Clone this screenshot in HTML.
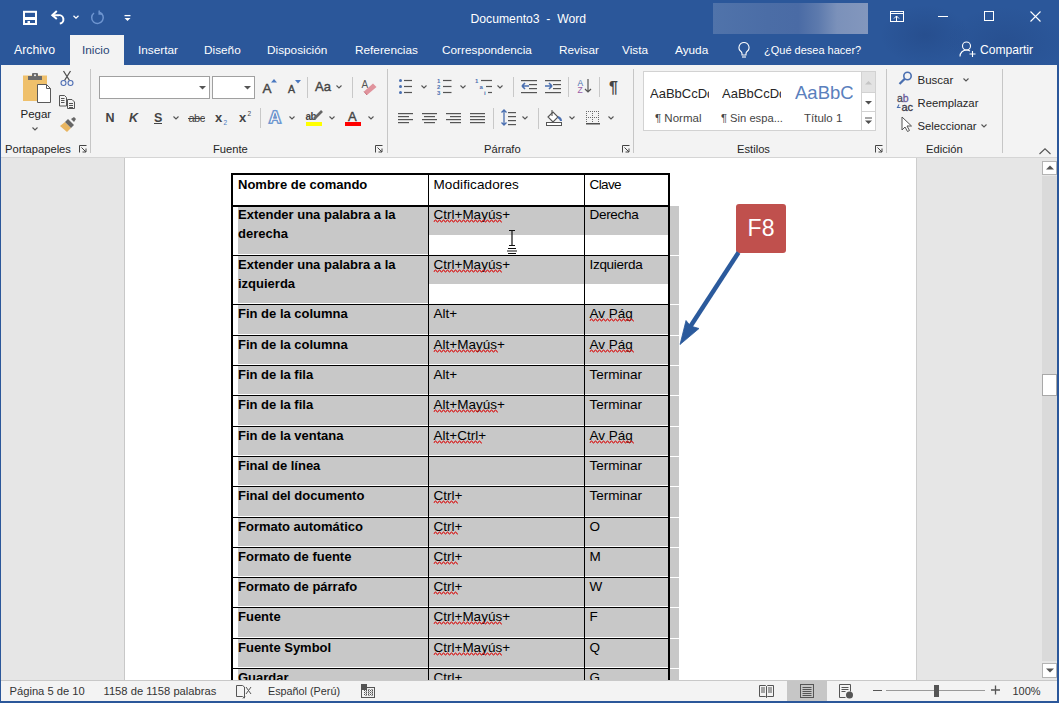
<!DOCTYPE html>
<html><head><meta charset="utf-8">
<style>
*{margin:0;padding:0;box-sizing:border-box}
html,body{width:1059px;height:703px;overflow:hidden;background:#2b579a;font-family:"Liberation Sans",sans-serif;position:relative}
.abs{position:absolute}
.t{position:absolute;white-space:nowrap}
svg{overflow:visible}
</style></head><body>
<div class="abs" style="left:0px;top:0px;width:1059px;height:65px;background:radial-gradient(ellipse 45px 30px at 925px 35px, rgba(20,40,90,0.18), rgba(20,40,90,0) ), radial-gradient(ellipse 60px 35px at 1005px 42px, rgba(20,40,90,0.15), rgba(20,40,90,0)), #2b579a;"></div>
<div class="abs" style="left:1px;top:65px;width:1056px;height:92px;background:#f3f3f3;"></div>
<div class="abs" style="left:1px;top:157px;width:1056px;height:1px;background:#d5d5d5;"></div>
<div class="abs" style="left:1px;top:158px;width:1056px;height:522px;background:#e6e6e6;"></div>
<div class="abs" style="left:125px;top:158px;width:791px;height:522px;background:#ffffff;"></div>
<div class="abs" style="left:124px;top:158px;width:1px;height:522px;background:#c8c8c8;"></div>
<div class="abs" style="left:916px;top:158px;width:1px;height:522px;background:#cdcdcd;"></div>
<div class="abs" style="left:1px;top:680px;width:1056px;height:1px;background:#c8c8c8;"></div>
<div class="abs" style="left:1px;top:681px;width:1056px;height:20px;background:#f3f3f3;"></div>
<div class="abs" style="left:713px;top:3px;width:155px;height:31px;background:linear-gradient(90deg,#5073aa 0%,#4b6da6 35%,#4a6ba5 55%,#5d7aad 68%,#7b91ba 80%,#8397bd 100%);"></div>
<div class="t" style="left:470.5px;top:11.47px;font-size:12.2px;line-height:17px;color:#ffffff;font-weight:normal;">Documento3&nbsp; -&nbsp; Word</div>
<svg class="abs" style="left:22px;top:10px;" width="16" height="16" viewBox="0 0 16 16"><rect x="2" y="1.8" width="12" height="12.2" fill="none" stroke="#fff" stroke-width="2"/><rect x="2" y="7" width="12" height="3" fill="#fff"/><rect x="5.5" y="11" width="2.5" height="3" fill="#fff"/></svg>
<svg class="abs" style="left:50px;top:9px;" width="14" height="17" viewBox="0 0 14 17"><path d="M2 6.2H8.5A4.2 4.2 0 0 1 9.8 14.6" fill="none" stroke="#fff" stroke-width="2"/><path d="M6.8 2.1L2.3 6.2 6.8 10" fill="none" stroke="#fff" stroke-width="2"/></svg>
<svg class="abs" style="left:73px;top:15px;" width="6" height="4" viewBox="0 0 6 4"><path d="M0.5 0.7l2.5 2.5 2.5-2.5" fill="none" stroke="#fff" stroke-width="1.3"/></svg>
<svg class="abs" style="left:90px;top:10px;" width="15" height="15" viewBox="0 0 15 15"><path d="M9.5 2.2A5.8 5.8 0 1 1 4 3" fill="none" stroke="#6e95d0" stroke-width="1.5"/><path d="M9.2 0.5v3.5h3" fill="none" stroke="#6e95d0" stroke-width="1.5"/></svg>
<svg class="abs" style="left:124px;top:14px;" width="7" height="8" viewBox="0 0 7 8"><path d="M0.5 1.6h6" stroke="#fff" stroke-width="1.3"/><path d="M0.5 4h6l-3 3z" fill="#fff"/></svg>
<svg class="abs" style="left:890px;top:11px;" width="15" height="12" viewBox="0 0 15 12"><rect x="0.5" y="0.5" width="13" height="10" fill="none" stroke="#fff"/><path d="M0.5 2.5h13" stroke="#fff"/><path d="M6.5 10V5" stroke="#fff"/><path d="M4 7.5l2.5-2.5 2.5 2.5" fill="none" stroke="#fff"/></svg>
<div class="abs" style="left:938px;top:16px;width:10px;height:1px;background:#fff;"></div>
<svg class="abs" style="left:984px;top:11px;" width="11" height="11" viewBox="0 0 11 11"><rect x="0.5" y="0.5" width="9" height="9" fill="none" stroke="#fff"/></svg>
<svg class="abs" style="left:1030px;top:11px;" width="11" height="11" viewBox="0 0 11 11"><path d="M0.5 0.5l10 10M10.5 0.5l-10 10" stroke="#fff" stroke-width="1.1"/></svg>
<div class="abs" style="left:70px;top:35px;width:54px;height:30px;background:#f3f3f3;"></div>
<div class="t" style="left:14px;top:42.14px;font-size:12.3px;line-height:17px;color:#ffffff;font-weight:normal;">Archivo</div>
<div class="t" style="left:82px;top:42.31px;font-size:11.8px;line-height:17px;color:#2a4575;font-weight:normal;">Inicio</div>
<div class="t" style="left:138px;top:42.31px;font-size:11.8px;line-height:17px;color:#ffffff;font-weight:normal;">Insertar</div>
<div class="t" style="left:204px;top:42.31px;font-size:11.8px;line-height:17px;color:#ffffff;font-weight:normal;">Diseño</div>
<div class="t" style="left:267px;top:42.31px;font-size:11.8px;line-height:17px;color:#ffffff;font-weight:normal;">Disposición</div>
<div class="t" style="left:355px;top:42.31px;font-size:11.8px;line-height:17px;color:#ffffff;font-weight:normal;">Referencias</div>
<div class="t" style="left:442px;top:42.31px;font-size:11.8px;line-height:17px;color:#ffffff;font-weight:normal;">Correspondencia</div>
<div class="t" style="left:559px;top:42.31px;font-size:11.8px;line-height:17px;color:#ffffff;font-weight:normal;">Revisar</div>
<div class="t" style="left:622px;top:42.31px;font-size:11.8px;line-height:17px;color:#ffffff;font-weight:normal;">Vista</div>
<div class="t" style="left:675px;top:42.31px;font-size:11.8px;line-height:17px;color:#ffffff;font-weight:normal;">Ayuda</div>
<svg class="abs" style="left:737px;top:41px;" width="14" height="18" viewBox="0 0 14 18"><path d="M7 1.5a5 5 0 0 0-3 9c.7.6 1 1.3 1 2.2V14h4v-1.3c0-.9.3-1.6 1-2.2a5 5 0 0 0-3-9z" fill="none" stroke="#fff" stroke-width="1.1"/><path d="M5 16h4" stroke="#fff" stroke-width="1.1"/></svg>
<div class="t" style="left:764px;top:43.19px;font-size:11px;line-height:15px;color:#ffffff;font-weight:normal;">¿Qué desea hacer?</div>
<svg class="abs" style="left:959px;top:41px;" width="18" height="17" viewBox="0 0 18 17"><circle cx="7.5" cy="5" r="4" fill="none" stroke="#fff" stroke-width="1.1"/><path d="M1 15.5c0-4 3-6.5 6.5-6.5 1.5 0 2.5.4 3.5 1" fill="none" stroke="#fff" stroke-width="1.1"/><path d="M13.5 10v6M10.5 13h6" stroke="#fff" stroke-width="1.1"/></svg>
<div class="t" style="left:980px;top:41.81px;font-size:12.1px;line-height:17px;color:#ffffff;font-weight:normal;">Compartir</div>
<div class="abs" style="left:90px;top:69px;width:1px;height:84px;background:#c6c6c6;"></div>
<div class="abs" style="left:387px;top:69px;width:1px;height:84px;background:#c6c6c6;"></div>
<div class="abs" style="left:633px;top:69px;width:1px;height:84px;background:#c6c6c6;"></div>
<div class="abs" style="left:886px;top:69px;width:1px;height:84px;background:#c6c6c6;"></div>
<div class="abs" style="left:1002px;top:69px;width:1px;height:84px;background:#c6c6c6;"></div>
<div class="t" style="left:5px;top:140.62px;font-size:11.2px;line-height:16px;color:#262626;font-weight:normal;">Portapapeles</div>
<div class="t" style="left:213px;top:140.62px;font-size:11.2px;line-height:16px;color:#262626;font-weight:normal;">Fuente</div>
<div class="t" style="left:484px;top:140.62px;font-size:11.2px;line-height:16px;color:#262626;font-weight:normal;">Párrafo</div>
<div class="t" style="left:737px;top:140.62px;font-size:11.2px;line-height:16px;color:#262626;font-weight:normal;">Estilos</div>
<div class="t" style="left:926px;top:140.62px;font-size:11.2px;line-height:16px;color:#262626;font-weight:normal;">Edición</div>
<svg class="abs" style="left:79px;top:145px;" width="8" height="8" viewBox="0 0 8 8"><path d="M0.5 7.5V0.5h7" fill="none" stroke="#444" stroke-width="1"/><path d="M2.5 2.5l4.5 4.5M3.5 7h3.5V3.5" fill="none" stroke="#444" stroke-width="1"/></svg>
<svg class="abs" style="left:375px;top:145px;" width="8" height="8" viewBox="0 0 8 8"><path d="M0.5 7.5V0.5h7" fill="none" stroke="#444" stroke-width="1"/><path d="M2.5 2.5l4.5 4.5M3.5 7h3.5V3.5" fill="none" stroke="#444" stroke-width="1"/></svg>
<svg class="abs" style="left:622px;top:145px;" width="8" height="8" viewBox="0 0 8 8"><path d="M0.5 7.5V0.5h7" fill="none" stroke="#444" stroke-width="1"/><path d="M2.5 2.5l4.5 4.5M3.5 7h3.5V3.5" fill="none" stroke="#444" stroke-width="1"/></svg>
<svg class="abs" style="left:875px;top:145px;" width="8" height="8" viewBox="0 0 8 8"><path d="M0.5 7.5V0.5h7" fill="none" stroke="#444" stroke-width="1"/><path d="M2.5 2.5l4.5 4.5M3.5 7h3.5V3.5" fill="none" stroke="#444" stroke-width="1"/></svg>
<svg class="abs" style="left:22px;top:72px;" width="30" height="32" viewBox="0 0 30 32"><rect x="1" y="3.5" width="24" height="25.5" fill="#efc06b"/>
<rect x="6" y="4" width="14" height="4" fill="#6a6a6a"/><rect x="10" y="1" width="6" height="4" rx="1" fill="#6a6a6a"/><circle cx="13" cy="3.2" r="1" fill="#f3f3f3"/>
<path d="M15.5 12.5H24.5L28.5 16.5V30.5H15.5Z" fill="#fff" stroke="#5a5a5a" stroke-width="1"/><path d="M24.5 12.5V16.5H28.5" fill="none" stroke="#5a5a5a" stroke-width="1"/></svg>
<div class="t" style="left:20.5px;top:105.52px;font-size:11.5px;line-height:16px;color:#1e1e1e;font-weight:normal;">Pegar</div>
<svg class="abs" style="left:32px;top:127px;" width="6" height="4" viewBox="0 0 6 4"><path d="M0.5 0.5l2.5 2.5 2.5-2.5" fill="none" stroke="#555" stroke-width="1.1"/></svg>
<svg class="abs" style="left:59px;top:70px;" width="16" height="17" viewBox="0 0 16 17"><path d="M4.5 1l6 9.5M11.5 1l-6 9.5" stroke="#505050" stroke-width="1.3"/>
<circle cx="4.5" cy="13" r="2.5" fill="none" stroke="#4f6fb5" stroke-width="1.1"/><circle cx="11.5" cy="13" r="2.5" fill="none" stroke="#4f6fb5" stroke-width="1.1"/></svg>
<svg class="abs" style="left:59px;top:95px;" width="16" height="14" viewBox="0 0 16 14"><path d="M0.5 0.5h5l2 2v8.5h-7z" fill="none" stroke="#555"/><path d="M2 3.5h3.5M2 5.5h3.5M2 7.5h3.5" stroke="#555"/>
<path d="M8.5 4.5h4.5l2.5 2.5v6.5h-7z" fill="#f3f3f3" stroke="#555"/><path d="M10 8.5h4M10 10.5h4M10 12.5h4" stroke="#555"/></svg>
<svg class="abs" style="left:59px;top:117px;" width="17" height="15" viewBox="0 0 17 15"><path d="M1 9l5-4 6 6-4 4z" fill="#e8b560"/><path d="M6 5l3-3 6 6-3 3z" fill="#666"/><path d="M12 2l3-2 2 2-2 3z" fill="#666"/></svg>
<div class="abs" style="left:99px;top:76px;width:111px;height:23px;background:#fff;border:1px solid #a0a0a0"></div>
<div class="abs" style="left:212px;top:76px;width:43px;height:23px;background:#fff;border:1px solid #a0a0a0"></div>
<svg class="abs" style="left:199px;top:86px;" width="7" height="4" viewBox="0 0 7 4"><path d="M0 0h7l-3.5 3.5z" fill="#555"/></svg>
<svg class="abs" style="left:244px;top:86px;" width="7" height="4" viewBox="0 0 7 4"><path d="M0 0h7l-3.5 3.5z" fill="#555"/></svg>
<div class="t" style="left:262.5px;top:78.82px;font-size:13.5px;line-height:19px;color:#444444;font-weight:normal;-webkit-text-stroke:0.4px #444">A</div>
<svg class="abs" style="left:271px;top:79px;" width="6" height="4" viewBox="0 0 6 4"><path d="M0 3.5h6L3 0z" fill="#4a78c0"/></svg>
<div class="t" style="left:288px;top:81.86px;font-size:10.5px;line-height:15px;color:#444444;font-weight:normal;-webkit-text-stroke:0.4px #444">A</div>
<svg class="abs" style="left:295px;top:80px;" width="6" height="4" viewBox="0 0 6 4"><path d="M0 0h6L3 3.5z" fill="#4a78c0"/></svg>
<div class="abs" style="left:307px;top:77px;width:1px;height:21px;background:#c8c8c8;"></div>
<div class="t" style="left:315px;top:78.00px;font-size:13px;line-height:18px;color:#444444;font-weight:normal;-webkit-text-stroke:0.4px #444">Aa</div>
<svg class="abs" style="left:336px;top:85px;" width="6" height="4" viewBox="0 0 6 4"><path d="M0.5 0.5l2.5 2.5 2.5-2.5" fill="none" stroke="#555" stroke-width="1.1"/></svg>
<div class="abs" style="left:352px;top:77px;width:1px;height:21px;background:#c8c8c8;"></div>
<div class="t" style="left:361.5px;top:77.53px;font-size:10px;line-height:14px;color:#555;font-weight:normal;">A</div>
<svg class="abs" style="left:363px;top:82px;" width="15" height="14" viewBox="0 0 15 14"><path d="M4 13L13.5 5 10 1.5 1 9.5z" fill="#e0939c"/><path d="M1 9.5L4 13" stroke="#c96f7a" stroke-width="1"/></svg>
<div class="t" style="left:105.5px;top:108.67px;font-size:12.5px;line-height:18px;color:#444444;font-weight:bold;">N</div>
<div class="t" style="left:129px;top:108.67px;font-size:12.5px;line-height:18px;color:#444444;font-weight:bold;font-style:italic">K</div>
<div class="t" style="left:154px;top:108.67px;font-size:12.5px;line-height:18px;color:#444444;font-weight:bold;">S</div>
<div class="abs" style="left:154px;top:123px;width:8px;height:1.2px;background:#444444;"></div>
<svg class="abs" style="left:173px;top:116px;" width="6" height="4" viewBox="0 0 6 4"><path d="M0.5 0.5l2.5 2.5 2.5-2.5" fill="none" stroke="#555" stroke-width="1.1"/></svg>
<div class="t" style="left:188.5px;top:110.69px;font-size:11px;line-height:15px;color:#444444;font-weight:normal;letter-spacing:-0.5px">abc</div>
<div class="abs" style="left:188px;top:118px;width:17px;height:1px;background:#444444;"></div>
<div class="t" style="left:215px;top:108.50px;font-size:13px;line-height:18px;color:#444444;font-weight:bold;">x</div>
<div class="t" style="left:223.5px;top:118.25px;font-size:6.5px;line-height:9px;color:#4a78c0;font-weight:normal;">2</div>
<div class="t" style="left:239px;top:108.50px;font-size:13px;line-height:18px;color:#444444;font-weight:bold;">x</div>
<div class="t" style="left:247.5px;top:109.25px;font-size:6.5px;line-height:9px;color:#444444;font-weight:normal;">2</div>
<div class="abs" style="left:260px;top:108px;width:1px;height:20px;background:#c8c8c8;"></div>
<svg class="abs" style="left:268px;top:109px;" width="16" height="16" viewBox="0 0 16 16"><text x="1" y="14" font-family="Liberation Sans" font-weight="bold" font-size="16.5" fill="#fff" stroke="#7aa6dc" stroke-width="2.2" paint-order="stroke">A</text><text x="1" y="14" font-family="Liberation Sans" font-weight="bold" font-size="16.5" fill="#fff" stroke="#3f6fb5" stroke-width="0.7">A</text></svg>
<svg class="abs" style="left:289px;top:116px;" width="6" height="4" viewBox="0 0 6 4"><path d="M0.5 0.5l2.5 2.5 2.5-2.5" fill="none" stroke="#555" stroke-width="1.1"/></svg>
<div class="t" style="left:305.5px;top:109.53px;font-size:10px;line-height:14px;color:#444444;font-weight:bold;letter-spacing:-0.5px">ab</div>
<svg class="abs" style="left:312px;top:109px;" width="11" height="12" viewBox="0 0 11 12"><path d="M2 10l8-8" stroke="#666" stroke-width="2.6"/></svg>
<div class="abs" style="left:306px;top:122px;width:16px;height:4px;background:#ffff00;"></div>
<svg class="abs" style="left:329px;top:116px;" width="6" height="4" viewBox="0 0 6 4"><path d="M0.5 0.5l2.5 2.5 2.5-2.5" fill="none" stroke="#555" stroke-width="1.1"/></svg>
<div class="t" style="left:348px;top:107.50px;font-size:13px;line-height:18px;color:#444444;font-weight:normal;-webkit-text-stroke:0.4px #444">A</div>
<div class="abs" style="left:345px;top:122px;width:16px;height:4px;background:#ff0000;"></div>
<svg class="abs" style="left:368px;top:116px;" width="6" height="4" viewBox="0 0 6 4"><path d="M0.5 0.5l2.5 2.5 2.5-2.5" fill="none" stroke="#555" stroke-width="1.1"/></svg>
<svg class="abs" style="left:398px;top:78px;" width="16" height="16" viewBox="0 0 16 16"><circle cx="2.5" cy="2.5" r="1.5" fill="#4a6fb0"/><rect x="6" y="1.9" width="8" height="1.2" fill="#555"/><circle cx="2.5" cy="8.5" r="1.5" fill="#4a6fb0"/><rect x="6" y="7.9" width="8" height="1.2" fill="#555"/><circle cx="2.5" cy="14.5" r="1.5" fill="#4a6fb0"/><rect x="6" y="13.9" width="8" height="1.2" fill="#555"/></svg>
<svg class="abs" style="left:421px;top:85px;" width="6" height="4" viewBox="0 0 6 4"><path d="M0.5 0.5l2.5 2.5 2.5-2.5" fill="none" stroke="#555" stroke-width="1.1"/></svg>
<svg class="abs" style="left:437px;top:78px;" width="16" height="17" viewBox="0 0 16 17"><text x="0" y="5.3" font-family="Liberation Sans" font-weight="bold" font-size="6" fill="#4a6fb0">1</text><rect x="6" y="1.9" width="8.5" height="1.2" fill="#555"/><text x="0" y="11.3" font-family="Liberation Sans" font-weight="bold" font-size="6" fill="#4a6fb0">2</text><rect x="6" y="7.9" width="8.5" height="1.2" fill="#555"/><text x="0" y="17.3" font-family="Liberation Sans" font-weight="bold" font-size="6" fill="#4a6fb0">3</text><rect x="6" y="13.9" width="8.5" height="1.2" fill="#555"/></svg>
<svg class="abs" style="left:460px;top:85px;" width="6" height="4" viewBox="0 0 6 4"><path d="M0.5 0.5l2.5 2.5 2.5-2.5" fill="none" stroke="#555" stroke-width="1.1"/></svg>
<svg class="abs" style="left:475px;top:78px;" width="18" height="17" viewBox="0 0 18 17"><text x="0" y="5" font-family="Liberation Sans" font-weight="bold" font-size="6" fill="#4a6fb0">1</text><rect x="6" y="1.9" width="11" height="1.2" fill="#555"/><text x="4.5" y="11" font-family="Liberation Sans" font-weight="bold" font-size="6" fill="#4a6fb0">a</text><rect x="11" y="7.9" width="6" height="1.2" fill="#555"/><text x="9" y="17" font-family="Liberation Sans" font-weight="bold" font-size="6" fill="#4a6fb0">i</text><rect x="13" y="13.9" width="4" height="1.2" fill="#555"/></svg>
<svg class="abs" style="left:497px;top:85px;" width="6" height="4" viewBox="0 0 6 4"><path d="M0.5 0.5l2.5 2.5 2.5-2.5" fill="none" stroke="#555" stroke-width="1.1"/></svg>
<div class="abs" style="left:513px;top:77px;width:1px;height:20px;background:#c8c8c8;"></div>
<svg class="abs" style="left:521px;top:79px;" width="17" height="15" viewBox="0 0 17 15"><rect x="0" y="1" width="16" height="1.2" fill="#555"/><rect x="8" y="5" width="8" height="1.2" fill="#555"/><rect x="8" y="9" width="8" height="1.2" fill="#555"/><rect x="0" y="13" width="16" height="1.2" fill="#555"/><path d="M1 7h7M1 7l3-3M1 7l3 3" fill="none" stroke="#4a6fb0" stroke-width="1.6"/></svg>
<svg class="abs" style="left:545px;top:79px;" width="17" height="15" viewBox="0 0 17 15"><rect x="0" y="1" width="16" height="1.2" fill="#555"/><rect x="8" y="5" width="8" height="1.2" fill="#555"/><rect x="8" y="9" width="8" height="1.2" fill="#555"/><rect x="0" y="13" width="16" height="1.2" fill="#555"/><path d="M0 7h7M7 7l-3-3M7 7l-3 3" fill="none" stroke="#4a6fb0" stroke-width="1.6"/></svg>
<div class="abs" style="left:568px;top:77px;width:1px;height:20px;background:#c8c8c8;"></div>
<svg class="abs" style="left:577px;top:78px;" width="14" height="16" viewBox="0 0 14 16"><text x="0.5" y="7.5" font-family="Liberation Sans" font-size="8.5" fill="#4a6fb0">A</text><text x="0.5" y="15" font-family="Liberation Sans" font-size="8.5" fill="#9b5fa8">Z</text><path d="M11 1v13M8 11l3 3 3-3" fill="none" stroke="#555" stroke-width="1.2"/></svg>
<div class="abs" style="left:599px;top:77px;width:1px;height:20px;background:#c8c8c8;"></div>
<div class="t" style="left:609px;top:76.96px;font-size:16px;line-height:22px;color:#444444;font-weight:bold;">¶</div>
<svg class="abs" style="left:398px;top:112px;" width="16" height="12" viewBox="0 0 16 12"><rect x="0" y="1" width="15" height="1.2" fill="#555"/><rect x="0" y="4" width="11" height="1.2" fill="#555"/><rect x="0" y="7" width="15" height="1.2" fill="#555"/><rect x="0" y="10" width="11" height="1.2" fill="#555"/></svg>
<svg class="abs" style="left:422px;top:112px;" width="16" height="12" viewBox="0 0 16 12"><rect x="0" y="1" width="15" height="1.2" fill="#555"/><rect x="2" y="4" width="11" height="1.2" fill="#555"/><rect x="0" y="7" width="15" height="1.2" fill="#555"/><rect x="2" y="10" width="11" height="1.2" fill="#555"/></svg>
<svg class="abs" style="left:446px;top:112px;" width="16" height="12" viewBox="0 0 16 12"><rect x="0" y="1" width="15" height="1.2" fill="#555"/><rect x="4" y="4" width="11" height="1.2" fill="#555"/><rect x="0" y="7" width="15" height="1.2" fill="#555"/><rect x="4" y="10" width="11" height="1.2" fill="#555"/></svg>
<svg class="abs" style="left:470px;top:112px;" width="16" height="12" viewBox="0 0 16 12"><rect x="0" y="1" width="15" height="1.2" fill="#555"/><rect x="0" y="4" width="15" height="1.2" fill="#555"/><rect x="0" y="7" width="15" height="1.2" fill="#555"/><rect x="0" y="10" width="15" height="1.2" fill="#555"/></svg>
<div class="abs" style="left:493px;top:108px;width:1px;height:21px;background:#c8c8c8;"></div>
<svg class="abs" style="left:501px;top:109px;" width="16" height="17" viewBox="0 0 16 17"><path d="M3 1v15M0.5 3.5L3 1l2.5 2.5M0.5 13.5L3 16l2.5-2.5" fill="none" stroke="#4a6fb0" stroke-width="1.3"/><rect x="7" y="3" width="8" height="1.2" fill="#555"/><rect x="7" y="7" width="8" height="1.2" fill="#555"/><rect x="7" y="11" width="8" height="1.2" fill="#555"/><rect x="7" y="15" width="8" height="1.2" fill="#555"/></svg>
<svg class="abs" style="left:522px;top:116px;" width="6" height="4" viewBox="0 0 6 4"><path d="M0.5 0.5l2.5 2.5 2.5-2.5" fill="none" stroke="#555" stroke-width="1.1"/></svg>
<div class="abs" style="left:538px;top:108px;width:1px;height:21px;background:#c8c8c8;"></div>
<svg class="abs" style="left:546px;top:109px;" width="17" height="17" viewBox="0 0 17 17"><path d="M2 8l5-5 5 5-5 5z" fill="#fff" stroke="#555" stroke-width="1.1"/><path d="M6 1v6" stroke="#555" stroke-width="1.1"/><path d="M12 8c2 1 3 2 3 4" fill="#4a6fb0" stroke="#4a6fb0" stroke-width="2"/><rect x="0.5" y="13.5" width="15" height="3" fill="#fff" stroke="#555"/></svg>
<svg class="abs" style="left:569px;top:116px;" width="6" height="4" viewBox="0 0 6 4"><path d="M0.5 0.5l2.5 2.5 2.5-2.5" fill="none" stroke="#555" stroke-width="1.1"/></svg>
<svg class="abs" style="left:586px;top:111px;" width="15" height="15" viewBox="0 0 15 15"><rect x="0" y="0" width="1" height="1" fill="#6a6a6a"/><rect x="0" y="2" width="1" height="1" fill="#6a6a6a"/><rect x="0" y="4" width="1" height="1" fill="#6a6a6a"/><rect x="0" y="6" width="1" height="1" fill="#6a6a6a"/><rect x="0" y="8" width="1" height="1" fill="#6a6a6a"/><rect x="0" y="10" width="1" height="1" fill="#6a6a6a"/><rect x="0" y="12" width="1" height="1" fill="#6a6a6a"/><rect x="2" y="0" width="1" height="1" fill="#6a6a6a"/><rect x="2" y="6" width="1" height="1" fill="#6a6a6a"/><rect x="4" y="0" width="1" height="1" fill="#6a6a6a"/><rect x="4" y="6" width="1" height="1" fill="#6a6a6a"/><rect x="6" y="0" width="1" height="1" fill="#6a6a6a"/><rect x="6" y="2" width="1" height="1" fill="#6a6a6a"/><rect x="6" y="4" width="1" height="1" fill="#6a6a6a"/><rect x="6" y="6" width="1" height="1" fill="#6a6a6a"/><rect x="6" y="8" width="1" height="1" fill="#6a6a6a"/><rect x="6" y="10" width="1" height="1" fill="#6a6a6a"/><rect x="6" y="12" width="1" height="1" fill="#6a6a6a"/><rect x="8" y="0" width="1" height="1" fill="#6a6a6a"/><rect x="8" y="6" width="1" height="1" fill="#6a6a6a"/><rect x="10" y="0" width="1" height="1" fill="#6a6a6a"/><rect x="10" y="6" width="1" height="1" fill="#6a6a6a"/><rect x="12" y="0" width="1" height="1" fill="#6a6a6a"/><rect x="12" y="2" width="1" height="1" fill="#6a6a6a"/><rect x="12" y="4" width="1" height="1" fill="#6a6a6a"/><rect x="12" y="6" width="1" height="1" fill="#6a6a6a"/><rect x="12" y="8" width="1" height="1" fill="#6a6a6a"/><rect x="12" y="10" width="1" height="1" fill="#6a6a6a"/><rect x="12" y="12" width="1" height="1" fill="#6a6a6a"/><rect x="0" y="12" width="14" height="1.5" fill="#505050"/></svg>
<svg class="abs" style="left:608px;top:116px;" width="6" height="4" viewBox="0 0 6 4"><path d="M0.5 0.5l2.5 2.5 2.5-2.5" fill="none" stroke="#555" stroke-width="1.1"/></svg>
<div class="abs" style="left:643px;top:71px;width:233px;height:60px;background:#fff;border:1px solid #d2d2d2"></div>
<div class="abs" style="left:861px;top:72px;width:14px;height:58px;background:#ffffff;border-left:1px solid #d2d2d2"></div>
<div class="abs" style="left:862px;top:72px;width:13px;height:20px;background:#e3e3e3;"></div>
<div class="abs" style="left:861px;top:92px;width:15px;height:1px;background:#d2d2d2;"></div>
<div class="abs" style="left:861px;top:111px;width:15px;height:1px;background:#d2d2d2;"></div>
<svg class="abs" style="left:865px;top:81px;" width="7" height="4" viewBox="0 0 7 4"><path d="M0 3.5h7L3.5 0z" fill="#c4c4c4"/></svg>
<svg class="abs" style="left:865px;top:101px;" width="7" height="4" viewBox="0 0 7 4"><path d="M0 0h7L3.5 3.5z" fill="#505050"/></svg>
<svg class="abs" style="left:865px;top:117px;" width="7" height="8" viewBox="0 0 7 8"><path d="M0 1h7" stroke="#505050" stroke-width="1"/><path d="M0 3.5h7L3.5 7z" fill="#505050"/></svg>
<div class="abs" style="left:650px;top:84px;width:59px;height:20px;overflow:hidden"><div class="t" style="left:0;top:0;font-size:13px;line-height:20px;color:#262626">AaBbCcDdE</div></div>
<div class="abs" style="left:722px;top:84px;width:59px;height:20px;overflow:hidden"><div class="t" style="left:0;top:0;font-size:13px;line-height:20px;color:#262626">AaBbCcDdE</div></div>
<div class="abs" style="left:795px;top:81px;width:58px;height:24px;overflow:hidden"><div class="t" style="left:0;top:0;font-size:18.5px;line-height:24px;color:#5a80bd">AaBbCcD</div></div>
<div class="t" style="left:655px;top:109.52px;font-size:11.5px;line-height:16px;color:#444;font-weight:normal;">¶ Normal</div>
<div class="t" style="left:721px;top:109.62px;font-size:11.2px;line-height:16px;color:#444;font-weight:normal;">¶ Sin espa...</div>
<div class="t" style="left:804px;top:109.52px;font-size:11.5px;line-height:16px;color:#444;font-weight:normal;">Título 1</div>
<svg class="abs" style="left:898px;top:71px;" width="15" height="14" viewBox="0 0 15 14"><circle cx="9.5" cy="5" r="3.7" fill="none" stroke="#4a6fb0" stroke-width="1.6"/><path d="M6.8 7.7L1.5 13" stroke="#4a6fb0" stroke-width="2.3"/></svg>
<div class="t" style="left:917.5px;top:72.02px;font-size:11.5px;line-height:16px;color:#262626;font-weight:normal;">Buscar</div>
<svg class="abs" style="left:963px;top:78px;" width="6" height="4" viewBox="0 0 6 4"><path d="M0.5 0.5l2.5 2.5 2.5-2.5" fill="none" stroke="#555" stroke-width="1.1"/></svg>
<svg class="abs" style="left:896px;top:93px;" width="18" height="18" viewBox="0 0 18 18"><text x="1" y="8.5" font-family="Liberation Sans" font-size="10.5" fill="#4a4a5a" stroke="#4a4a5a" stroke-width="0.3">a</text><text x="6.8" y="8.5" font-family="Liberation Sans" font-size="10.5" fill="#6a5a9a" stroke="#6a5a9a" stroke-width="0.3">b</text><text x="5.5" y="17.5" font-family="Liberation Sans" font-size="11" fill="#3a3a4a" stroke="#3a3a4a" stroke-width="0.3">ac</text><path d="M3 11.5l-1.5 3h3" fill="none" stroke="#4a6fb0" stroke-width="1.1"/></svg>
<div class="t" style="left:917.5px;top:94.88px;font-size:11.3px;line-height:16px;color:#262626;font-weight:normal;">Reemplazar</div>
<svg class="abs" style="left:901px;top:116px;" width="12" height="16" viewBox="0 0 12 16"><path d="M1 1v13l3-3 2.5 4.5 2-1L6 10h4.5z" fill="#fff" stroke="#555" stroke-width="1"/></svg>
<div class="t" style="left:917.5px;top:117.88px;font-size:11.3px;line-height:16px;color:#262626;font-weight:normal;">Seleccionar</div>
<svg class="abs" style="left:981px;top:124px;" width="6" height="4" viewBox="0 0 6 4"><path d="M0.5 0.5l2.5 2.5 2.5-2.5" fill="none" stroke="#555" stroke-width="1.1"/></svg>
<svg class="abs" style="left:1039px;top:148px;" width="12" height="7" viewBox="0 0 12 7"><path d="M0.5 6L6 0.8 11.5 6" fill="none" stroke="#555" stroke-width="1.1"/></svg>
<div class="abs" style="left:0;top:158px;width:1059px;height:522px;overflow:hidden">
<div class="abs" style="left:238px;top:49px;width:190px;height:47px;background:#c8c8c8;"></div>
<div class="abs" style="left:429px;top:49px;width:155px;height:28px;background:#c8c8c8;"></div>
<div class="abs" style="left:585px;top:49px;width:83px;height:28px;background:#c8c8c8;"></div>
<div class="abs" style="left:670px;top:48px;width:9px;height:49px;background:#c8c8c8;"></div>
<div class="abs" style="left:238px;top:98px;width:190px;height:47px;background:#c8c8c8;"></div>
<div class="abs" style="left:429px;top:98px;width:155px;height:28px;background:#c8c8c8;"></div>
<div class="abs" style="left:585px;top:98px;width:83px;height:28px;background:#c8c8c8;"></div>
<div class="abs" style="left:670px;top:98px;width:9px;height:48px;background:#c8c8c8;"></div>
<div class="abs" style="left:238px;top:147px;width:190px;height:29px;background:#c8c8c8;"></div>
<div class="abs" style="left:429px;top:147px;width:155px;height:29px;background:#c8c8c8;"></div>
<div class="abs" style="left:585px;top:147px;width:83px;height:29px;background:#c8c8c8;"></div>
<div class="abs" style="left:670px;top:147px;width:9px;height:30px;background:#c8c8c8;"></div>
<div class="abs" style="left:238px;top:178px;width:190px;height:28px;background:#c8c8c8;"></div>
<div class="abs" style="left:429px;top:178px;width:155px;height:28px;background:#c8c8c8;"></div>
<div class="abs" style="left:585px;top:178px;width:83px;height:28px;background:#c8c8c8;"></div>
<div class="abs" style="left:670px;top:178px;width:9px;height:29px;background:#c8c8c8;"></div>
<div class="abs" style="left:238px;top:208px;width:190px;height:28px;background:#c8c8c8;"></div>
<div class="abs" style="left:429px;top:208px;width:155px;height:28px;background:#c8c8c8;"></div>
<div class="abs" style="left:585px;top:208px;width:83px;height:28px;background:#c8c8c8;"></div>
<div class="abs" style="left:670px;top:208px;width:9px;height:29px;background:#c8c8c8;"></div>
<div class="abs" style="left:238px;top:238px;width:190px;height:29px;background:#c8c8c8;"></div>
<div class="abs" style="left:429px;top:238px;width:155px;height:29px;background:#c8c8c8;"></div>
<div class="abs" style="left:585px;top:238px;width:83px;height:29px;background:#c8c8c8;"></div>
<div class="abs" style="left:670px;top:238px;width:9px;height:30px;background:#c8c8c8;"></div>
<div class="abs" style="left:238px;top:269px;width:190px;height:28px;background:#c8c8c8;"></div>
<div class="abs" style="left:429px;top:269px;width:155px;height:28px;background:#c8c8c8;"></div>
<div class="abs" style="left:585px;top:269px;width:83px;height:28px;background:#c8c8c8;"></div>
<div class="abs" style="left:670px;top:269px;width:9px;height:29px;background:#c8c8c8;"></div>
<div class="abs" style="left:238px;top:299px;width:190px;height:28px;background:#c8c8c8;"></div>
<div class="abs" style="left:429px;top:299px;width:155px;height:28px;background:#c8c8c8;"></div>
<div class="abs" style="left:585px;top:299px;width:83px;height:28px;background:#c8c8c8;"></div>
<div class="abs" style="left:670px;top:299px;width:9px;height:29px;background:#c8c8c8;"></div>
<div class="abs" style="left:238px;top:329px;width:190px;height:29px;background:#c8c8c8;"></div>
<div class="abs" style="left:429px;top:329px;width:155px;height:29px;background:#c8c8c8;"></div>
<div class="abs" style="left:585px;top:329px;width:83px;height:29px;background:#c8c8c8;"></div>
<div class="abs" style="left:670px;top:329px;width:9px;height:30px;background:#c8c8c8;"></div>
<div class="abs" style="left:238px;top:360px;width:190px;height:28px;background:#c8c8c8;"></div>
<div class="abs" style="left:429px;top:360px;width:155px;height:28px;background:#c8c8c8;"></div>
<div class="abs" style="left:585px;top:360px;width:83px;height:28px;background:#c8c8c8;"></div>
<div class="abs" style="left:670px;top:360px;width:9px;height:29px;background:#c8c8c8;"></div>
<div class="abs" style="left:238px;top:390px;width:190px;height:28px;background:#c8c8c8;"></div>
<div class="abs" style="left:429px;top:390px;width:155px;height:28px;background:#c8c8c8;"></div>
<div class="abs" style="left:585px;top:390px;width:83px;height:28px;background:#c8c8c8;"></div>
<div class="abs" style="left:670px;top:390px;width:9px;height:29px;background:#c8c8c8;"></div>
<div class="abs" style="left:238px;top:420px;width:190px;height:28px;background:#c8c8c8;"></div>
<div class="abs" style="left:429px;top:420px;width:155px;height:28px;background:#c8c8c8;"></div>
<div class="abs" style="left:585px;top:420px;width:83px;height:28px;background:#c8c8c8;"></div>
<div class="abs" style="left:670px;top:420px;width:9px;height:29px;background:#c8c8c8;"></div>
<div class="abs" style="left:238px;top:450px;width:190px;height:29px;background:#c8c8c8;"></div>
<div class="abs" style="left:429px;top:450px;width:155px;height:29px;background:#c8c8c8;"></div>
<div class="abs" style="left:585px;top:450px;width:83px;height:29px;background:#c8c8c8;"></div>
<div class="abs" style="left:670px;top:450px;width:9px;height:30px;background:#c8c8c8;"></div>
<div class="abs" style="left:238px;top:481px;width:190px;height:28px;background:#c8c8c8;"></div>
<div class="abs" style="left:429px;top:481px;width:155px;height:28px;background:#c8c8c8;"></div>
<div class="abs" style="left:585px;top:481px;width:83px;height:28px;background:#c8c8c8;"></div>
<div class="abs" style="left:670px;top:481px;width:9px;height:29px;background:#c8c8c8;"></div>
<div class="abs" style="left:238px;top:511px;width:190px;height:28px;background:#c8c8c8;"></div>
<div class="abs" style="left:429px;top:511px;width:155px;height:28px;background:#c8c8c8;"></div>
<div class="abs" style="left:585px;top:511px;width:83px;height:28px;background:#c8c8c8;"></div>
<div class="abs" style="left:670px;top:511px;width:9px;height:29px;background:#c8c8c8;"></div>
<div class="abs" style="left:231px;top:15px;width:439px;height:2px;background:#000000;"></div>
<div class="abs" style="left:231px;top:47px;width:439px;height:2px;background:#000000;"></div>
<div class="abs" style="left:231px;top:15px;width:2px;height:530px;background:#000000;"></div>
<div class="abs" style="left:668px;top:15px;width:2px;height:530px;background:#000000;"></div>
<div class="abs" style="left:428px;top:15px;width:1px;height:530px;background:#000000;"></div>
<div class="abs" style="left:584px;top:15px;width:1px;height:530px;background:#000000;"></div>
<div class="abs" style="left:231px;top:97px;width:439px;height:1px;background:#000000;"></div>
<div class="abs" style="left:231px;top:146px;width:439px;height:1px;background:#000000;"></div>
<div class="abs" style="left:231px;top:177px;width:439px;height:1px;background:#000000;"></div>
<div class="abs" style="left:231px;top:207px;width:439px;height:1px;background:#000000;"></div>
<div class="abs" style="left:231px;top:237px;width:439px;height:1px;background:#000000;"></div>
<div class="abs" style="left:231px;top:268px;width:439px;height:1px;background:#000000;"></div>
<div class="abs" style="left:231px;top:298px;width:439px;height:1px;background:#000000;"></div>
<div class="abs" style="left:231px;top:328px;width:439px;height:1px;background:#000000;"></div>
<div class="abs" style="left:231px;top:359px;width:439px;height:1px;background:#000000;"></div>
<div class="abs" style="left:231px;top:389px;width:439px;height:1px;background:#000000;"></div>
<div class="abs" style="left:231px;top:419px;width:439px;height:1px;background:#000000;"></div>
<div class="abs" style="left:231px;top:449px;width:439px;height:1px;background:#000000;"></div>
<div class="abs" style="left:231px;top:480px;width:439px;height:1px;background:#000000;"></div>
<div class="abs" style="left:231px;top:510px;width:439px;height:1px;background:#000000;"></div>
<div class="abs" style="left:231px;top:540px;width:439px;height:1px;background:#000000;"></div>
<div class="t" style="left:238px;top:16.90px;font-size:13px;line-height:19px;color:#000;font-weight:bold;">Nombre de comando</div>
<div class="t" style="left:433.5px;top:16.72px;font-size:13.5px;line-height:19px;color:#000;font-weight:normal;letter-spacing:0.1px">Modificadores</div>
<div class="t" style="left:589.5px;top:16.72px;font-size:13.5px;line-height:19px;color:#000;font-weight:normal;letter-spacing:-0.6px">Clave</div>
<div class="t" style="left:238px;top:46.80px;font-size:13px;line-height:19px;color:#000;font-weight:bold;">Extender una palabra a la</div>
<div class="t" style="left:238px;top:65.60px;font-size:13px;line-height:19px;color:#000;font-weight:bold;">derecha</div>
<div class="t" style="left:433.5px;top:46.62px;font-size:13.5px;line-height:19px;color:#000;font-weight:normal;">Ctrl+Mayús+</div>
<svg class="abs" style="left:434px;top:62.30000000000001px" width="67" height="3" viewBox="0 0 67 3"><path d="M0 2 l1 -2 l1 0 l1 2 l1 0 l1 -2 l1 0 l1 2 l1 0 l1 -2 l1 0 l1 2 l1 0 l1 -2 l1 0 l1 2 l1 0 l1 -2 l1 0 l1 2 l1 0 l1 -2 l1 0 l1 2 l1 0 l1 -2 l1 0 l1 2 l1 0 l1 -2 l1 0 l1 2 l1 0 l1 -2 l1 0 l1 2 l1 0 l1 -2 l1 0 l1 2 l1 0 l1 -2 l1 0 l1 2 l1 0 l1 -2 l1 0 l1 2 l1 0 l1 -2 l1 0 l1 2 l1 0 l1 -2 l1 0 l1 2 l1 0 l1 -2 l1 0 l1 2 l1 0 l1 -2 l1 0 l1 2 l1 0 l1 -2 l1 0 l1 2 l1 0" fill="none" stroke="#d81c1c" stroke-width="1"/></svg>
<div class="t" style="left:589.5px;top:46.62px;font-size:13.5px;line-height:19px;color:#000;font-weight:normal;letter-spacing:-0.3px">Derecha</div>
<div class="t" style="left:238px;top:96.70px;font-size:13px;line-height:19px;color:#000;font-weight:bold;">Extender una palabra a la</div>
<div class="t" style="left:238px;top:115.60px;font-size:13px;line-height:19px;color:#000;font-weight:bold;">izquierda</div>
<div class="t" style="left:433.5px;top:96.52px;font-size:13.5px;line-height:19px;color:#000;font-weight:normal;">Ctrl+Mayús+</div>
<svg class="abs" style="left:434px;top:112.19999999999999px" width="67" height="3" viewBox="0 0 67 3"><path d="M0 2 l1 -2 l1 0 l1 2 l1 0 l1 -2 l1 0 l1 2 l1 0 l1 -2 l1 0 l1 2 l1 0 l1 -2 l1 0 l1 2 l1 0 l1 -2 l1 0 l1 2 l1 0 l1 -2 l1 0 l1 2 l1 0 l1 -2 l1 0 l1 2 l1 0 l1 -2 l1 0 l1 2 l1 0 l1 -2 l1 0 l1 2 l1 0 l1 -2 l1 0 l1 2 l1 0 l1 -2 l1 0 l1 2 l1 0 l1 -2 l1 0 l1 2 l1 0 l1 -2 l1 0 l1 2 l1 0 l1 -2 l1 0 l1 2 l1 0 l1 -2 l1 0 l1 2 l1 0 l1 -2 l1 0 l1 2 l1 0 l1 -2 l1 0 l1 2 l1 0" fill="none" stroke="#d81c1c" stroke-width="1"/></svg>
<div class="t" style="left:589.5px;top:96.52px;font-size:13.5px;line-height:19px;color:#000;font-weight:normal;letter-spacing:-0.3px">Izquierda</div>
<div class="t" style="left:238px;top:145.70px;font-size:13px;line-height:19px;color:#000;font-weight:bold;">Fin de la columna</div>
<div class="t" style="left:433.5px;top:145.52px;font-size:13.5px;line-height:19px;color:#000;font-weight:normal;">Alt+</div>
<div class="t" style="left:589.5px;top:145.52px;font-size:13.5px;line-height:19px;color:#000;font-weight:normal;">Av Pág</div>
<svg class="abs" style="left:590px;top:161.2px" width="40" height="3" viewBox="0 0 40 3"><path d="M0 2 l1 -2 l1 0 l1 2 l1 0 l1 -2 l1 0 l1 2 l1 0 l1 -2 l1 0 l1 2 l1 0 l1 -2 l1 0 l1 2 l1 0 l1 -2 l1 0 l1 2 l1 0 l1 -2 l1 0 l1 2 l1 0 l1 -2 l1 0 l1 2 l1 0 l1 -2 l1 0 l1 2 l1 0 l1 -2 l1 0 l1 2 l1 0 l1 -2 l1 0 l1 2 l1 0 l1 -2 l1 0 l1 2 l1 0" fill="none" stroke="#d81c1c" stroke-width="1"/></svg>
<div class="t" style="left:238px;top:176.70px;font-size:13px;line-height:19px;color:#000;font-weight:bold;">Fin de la columna</div>
<div class="t" style="left:433.5px;top:176.52px;font-size:13.5px;line-height:19px;color:#000;font-weight:normal;">Alt+Mayús+</div>
<svg class="abs" style="left:434px;top:192.2px" width="63" height="3" viewBox="0 0 63 3"><path d="M0 2 l1 -2 l1 0 l1 2 l1 0 l1 -2 l1 0 l1 2 l1 0 l1 -2 l1 0 l1 2 l1 0 l1 -2 l1 0 l1 2 l1 0 l1 -2 l1 0 l1 2 l1 0 l1 -2 l1 0 l1 2 l1 0 l1 -2 l1 0 l1 2 l1 0 l1 -2 l1 0 l1 2 l1 0 l1 -2 l1 0 l1 2 l1 0 l1 -2 l1 0 l1 2 l1 0 l1 -2 l1 0 l1 2 l1 0 l1 -2 l1 0 l1 2 l1 0 l1 -2 l1 0 l1 2 l1 0 l1 -2 l1 0 l1 2 l1 0 l1 -2 l1 0 l1 2 l1 0 l1 -2 l1 0 l1 2 l1 0" fill="none" stroke="#d81c1c" stroke-width="1"/></svg>
<div class="t" style="left:589.5px;top:176.52px;font-size:13.5px;line-height:19px;color:#000;font-weight:normal;">Av Pág</div>
<svg class="abs" style="left:590px;top:192.2px" width="40" height="3" viewBox="0 0 40 3"><path d="M0 2 l1 -2 l1 0 l1 2 l1 0 l1 -2 l1 0 l1 2 l1 0 l1 -2 l1 0 l1 2 l1 0 l1 -2 l1 0 l1 2 l1 0 l1 -2 l1 0 l1 2 l1 0 l1 -2 l1 0 l1 2 l1 0 l1 -2 l1 0 l1 2 l1 0 l1 -2 l1 0 l1 2 l1 0 l1 -2 l1 0 l1 2 l1 0 l1 -2 l1 0 l1 2 l1 0 l1 -2 l1 0 l1 2 l1 0" fill="none" stroke="#d81c1c" stroke-width="1"/></svg>
<div class="t" style="left:238px;top:206.70px;font-size:13px;line-height:19px;color:#000;font-weight:bold;">Fin de la fila</div>
<div class="t" style="left:433.5px;top:206.52px;font-size:13.5px;line-height:19px;color:#000;font-weight:normal;">Alt+</div>
<div class="t" style="left:589.5px;top:206.52px;font-size:13.5px;line-height:19px;color:#000;font-weight:normal;">Terminar</div>
<div class="t" style="left:238px;top:236.70px;font-size:13px;line-height:19px;color:#000;font-weight:bold;">Fin de la fila</div>
<div class="t" style="left:433.5px;top:236.52px;font-size:13.5px;line-height:19px;color:#000;font-weight:normal;">Alt+Mayús+</div>
<svg class="abs" style="left:434px;top:252.2px" width="63" height="3" viewBox="0 0 63 3"><path d="M0 2 l1 -2 l1 0 l1 2 l1 0 l1 -2 l1 0 l1 2 l1 0 l1 -2 l1 0 l1 2 l1 0 l1 -2 l1 0 l1 2 l1 0 l1 -2 l1 0 l1 2 l1 0 l1 -2 l1 0 l1 2 l1 0 l1 -2 l1 0 l1 2 l1 0 l1 -2 l1 0 l1 2 l1 0 l1 -2 l1 0 l1 2 l1 0 l1 -2 l1 0 l1 2 l1 0 l1 -2 l1 0 l1 2 l1 0 l1 -2 l1 0 l1 2 l1 0 l1 -2 l1 0 l1 2 l1 0 l1 -2 l1 0 l1 2 l1 0 l1 -2 l1 0 l1 2 l1 0 l1 -2 l1 0 l1 2 l1 0" fill="none" stroke="#d81c1c" stroke-width="1"/></svg>
<div class="t" style="left:589.5px;top:236.52px;font-size:13.5px;line-height:19px;color:#000;font-weight:normal;">Terminar</div>
<div class="t" style="left:238px;top:267.70px;font-size:13px;line-height:19px;color:#000;font-weight:bold;">Fin de la ventana</div>
<div class="t" style="left:433.5px;top:267.52px;font-size:13.5px;line-height:19px;color:#000;font-weight:normal;">Alt+Ctrl+</div>
<svg class="abs" style="left:434px;top:283.2px" width="46" height="3" viewBox="0 0 46 3"><path d="M0 2 l1 -2 l1 0 l1 2 l1 0 l1 -2 l1 0 l1 2 l1 0 l1 -2 l1 0 l1 2 l1 0 l1 -2 l1 0 l1 2 l1 0 l1 -2 l1 0 l1 2 l1 0 l1 -2 l1 0 l1 2 l1 0 l1 -2 l1 0 l1 2 l1 0 l1 -2 l1 0 l1 2 l1 0 l1 -2 l1 0 l1 2 l1 0 l1 -2 l1 0 l1 2 l1 0 l1 -2 l1 0 l1 2 l1 0 l1 -2 l1 0 l1 2 l1 0" fill="none" stroke="#d81c1c" stroke-width="1"/></svg>
<div class="t" style="left:589.5px;top:267.52px;font-size:13.5px;line-height:19px;color:#000;font-weight:normal;">Av Pág</div>
<svg class="abs" style="left:590px;top:283.2px" width="40" height="3" viewBox="0 0 40 3"><path d="M0 2 l1 -2 l1 0 l1 2 l1 0 l1 -2 l1 0 l1 2 l1 0 l1 -2 l1 0 l1 2 l1 0 l1 -2 l1 0 l1 2 l1 0 l1 -2 l1 0 l1 2 l1 0 l1 -2 l1 0 l1 2 l1 0 l1 -2 l1 0 l1 2 l1 0 l1 -2 l1 0 l1 2 l1 0 l1 -2 l1 0 l1 2 l1 0 l1 -2 l1 0 l1 2 l1 0 l1 -2 l1 0 l1 2 l1 0" fill="none" stroke="#d81c1c" stroke-width="1"/></svg>
<div class="t" style="left:238px;top:297.70px;font-size:13px;line-height:19px;color:#000;font-weight:bold;">Final de línea</div>
<div class="t" style="left:589.5px;top:297.52px;font-size:13.5px;line-height:19px;color:#000;font-weight:normal;">Terminar</div>
<div class="t" style="left:238px;top:327.70px;font-size:13px;line-height:19px;color:#000;font-weight:bold;">Final del documento</div>
<div class="t" style="left:433.5px;top:327.52px;font-size:13.5px;line-height:19px;color:#000;font-weight:normal;">Ctrl+</div>
<svg class="abs" style="left:434px;top:343.2px" width="22" height="3" viewBox="0 0 22 3"><path d="M0 2 l1 -2 l1 0 l1 2 l1 0 l1 -2 l1 0 l1 2 l1 0 l1 -2 l1 0 l1 2 l1 0 l1 -2 l1 0 l1 2 l1 0 l1 -2 l1 0 l1 2 l1 0 l1 -2 l1 0 l1 2 l1 0" fill="none" stroke="#d81c1c" stroke-width="1"/></svg>
<div class="t" style="left:589.5px;top:327.52px;font-size:13.5px;line-height:19px;color:#000;font-weight:normal;">Terminar</div>
<div class="t" style="left:238px;top:358.70px;font-size:13px;line-height:19px;color:#000;font-weight:bold;">Formato automático</div>
<div class="t" style="left:433.5px;top:358.52px;font-size:13.5px;line-height:19px;color:#000;font-weight:normal;">Ctrl+</div>
<svg class="abs" style="left:434px;top:374.20000000000005px" width="22" height="3" viewBox="0 0 22 3"><path d="M0 2 l1 -2 l1 0 l1 2 l1 0 l1 -2 l1 0 l1 2 l1 0 l1 -2 l1 0 l1 2 l1 0 l1 -2 l1 0 l1 2 l1 0 l1 -2 l1 0 l1 2 l1 0 l1 -2 l1 0 l1 2 l1 0" fill="none" stroke="#d81c1c" stroke-width="1"/></svg>
<div class="t" style="left:589.5px;top:358.52px;font-size:13.5px;line-height:19px;color:#000;font-weight:normal;">O</div>
<div class="t" style="left:238px;top:388.70px;font-size:13px;line-height:19px;color:#000;font-weight:bold;">Formato de fuente</div>
<div class="t" style="left:433.5px;top:388.52px;font-size:13.5px;line-height:19px;color:#000;font-weight:normal;">Ctrl+</div>
<svg class="abs" style="left:434px;top:404.20000000000005px" width="22" height="3" viewBox="0 0 22 3"><path d="M0 2 l1 -2 l1 0 l1 2 l1 0 l1 -2 l1 0 l1 2 l1 0 l1 -2 l1 0 l1 2 l1 0 l1 -2 l1 0 l1 2 l1 0 l1 -2 l1 0 l1 2 l1 0 l1 -2 l1 0 l1 2 l1 0" fill="none" stroke="#d81c1c" stroke-width="1"/></svg>
<div class="t" style="left:589.5px;top:388.52px;font-size:13.5px;line-height:19px;color:#000;font-weight:normal;">M</div>
<div class="t" style="left:238px;top:418.70px;font-size:13px;line-height:19px;color:#000;font-weight:bold;">Formato de párrafo</div>
<div class="t" style="left:433.5px;top:418.52px;font-size:13.5px;line-height:19px;color:#000;font-weight:normal;">Ctrl+</div>
<svg class="abs" style="left:434px;top:434.20000000000005px" width="22" height="3" viewBox="0 0 22 3"><path d="M0 2 l1 -2 l1 0 l1 2 l1 0 l1 -2 l1 0 l1 2 l1 0 l1 -2 l1 0 l1 2 l1 0 l1 -2 l1 0 l1 2 l1 0 l1 -2 l1 0 l1 2 l1 0 l1 -2 l1 0 l1 2 l1 0" fill="none" stroke="#d81c1c" stroke-width="1"/></svg>
<div class="t" style="left:589.5px;top:418.52px;font-size:13.5px;line-height:19px;color:#000;font-weight:normal;">W</div>
<div class="t" style="left:238px;top:448.70px;font-size:13px;line-height:19px;color:#000;font-weight:bold;">Fuente</div>
<div class="t" style="left:433.5px;top:448.52px;font-size:13.5px;line-height:19px;color:#000;font-weight:normal;">Ctrl+Mayús+</div>
<svg class="abs" style="left:434px;top:464.20000000000005px" width="67" height="3" viewBox="0 0 67 3"><path d="M0 2 l1 -2 l1 0 l1 2 l1 0 l1 -2 l1 0 l1 2 l1 0 l1 -2 l1 0 l1 2 l1 0 l1 -2 l1 0 l1 2 l1 0 l1 -2 l1 0 l1 2 l1 0 l1 -2 l1 0 l1 2 l1 0 l1 -2 l1 0 l1 2 l1 0 l1 -2 l1 0 l1 2 l1 0 l1 -2 l1 0 l1 2 l1 0 l1 -2 l1 0 l1 2 l1 0 l1 -2 l1 0 l1 2 l1 0 l1 -2 l1 0 l1 2 l1 0 l1 -2 l1 0 l1 2 l1 0 l1 -2 l1 0 l1 2 l1 0 l1 -2 l1 0 l1 2 l1 0 l1 -2 l1 0 l1 2 l1 0 l1 -2 l1 0 l1 2 l1 0" fill="none" stroke="#d81c1c" stroke-width="1"/></svg>
<div class="t" style="left:589.5px;top:448.52px;font-size:13.5px;line-height:19px;color:#000;font-weight:normal;">F</div>
<div class="t" style="left:238px;top:479.70px;font-size:13px;line-height:19px;color:#000;font-weight:bold;">Fuente Symbol</div>
<div class="t" style="left:433.5px;top:479.52px;font-size:13.5px;line-height:19px;color:#000;font-weight:normal;">Ctrl+Mayús+</div>
<svg class="abs" style="left:434px;top:495.20000000000005px" width="67" height="3" viewBox="0 0 67 3"><path d="M0 2 l1 -2 l1 0 l1 2 l1 0 l1 -2 l1 0 l1 2 l1 0 l1 -2 l1 0 l1 2 l1 0 l1 -2 l1 0 l1 2 l1 0 l1 -2 l1 0 l1 2 l1 0 l1 -2 l1 0 l1 2 l1 0 l1 -2 l1 0 l1 2 l1 0 l1 -2 l1 0 l1 2 l1 0 l1 -2 l1 0 l1 2 l1 0 l1 -2 l1 0 l1 2 l1 0 l1 -2 l1 0 l1 2 l1 0 l1 -2 l1 0 l1 2 l1 0 l1 -2 l1 0 l1 2 l1 0 l1 -2 l1 0 l1 2 l1 0 l1 -2 l1 0 l1 2 l1 0 l1 -2 l1 0 l1 2 l1 0 l1 -2 l1 0 l1 2 l1 0" fill="none" stroke="#d81c1c" stroke-width="1"/></svg>
<div class="t" style="left:589.5px;top:479.52px;font-size:13.5px;line-height:19px;color:#000;font-weight:normal;">Q</div>
<div class="t" style="left:238px;top:509.70px;font-size:13px;line-height:19px;color:#000;font-weight:bold;">Guardar</div>
<div class="t" style="left:433.5px;top:509.52px;font-size:13.5px;line-height:19px;color:#000;font-weight:normal;">Ctrl+</div>
<svg class="abs" style="left:434px;top:525.2px" width="22" height="3" viewBox="0 0 22 3"><path d="M0 2 l1 -2 l1 0 l1 2 l1 0 l1 -2 l1 0 l1 2 l1 0 l1 -2 l1 0 l1 2 l1 0 l1 -2 l1 0 l1 2 l1 0 l1 -2 l1 0 l1 2 l1 0 l1 -2 l1 0 l1 2 l1 0" fill="none" stroke="#d81c1c" stroke-width="1"/></svg>
<div class="t" style="left:589.5px;top:509.52px;font-size:13.5px;line-height:19px;color:#000;font-weight:normal;">G</div>
<svg class="abs" style="left:506px;top:71px" width="12" height="28" viewBox="0 0 12 28"><path d="M3 1.5h6M6 1.5v15M3 16.5h6" stroke="#111" stroke-width="1.2" fill="none"/><path d="M2 19.5h8M1 22h10M2 24.5h8" stroke="#111" stroke-width="1.2"/></svg>
<div class="abs" style="left:736px;top:46px;width:50px;height:49px;background:#c0504d;border-radius:3px"></div>
<div class="t" style="left:736px;top:46px;width:50px;height:49px;line-height:49px;text-align:center;font-size:23px;color:#fff">F8</div>
<svg class="abs" style="left:0;top:-158px" width="1059" height="703" viewBox="0 0 1059 703"><path d="M738.5 252.5L690 327" stroke="#2b5a9c" stroke-width="4.5" fill="none"/><path d="M680 344.5L686 320.5L690.5 326L699 328.5z" fill="#2b5a9c" stroke="#2b5a9c" stroke-width="0.8" stroke-linejoin="round"/></svg>
</div>
<div class="abs" style="left:1042px;top:176px;width:15px;height:485px;background:#dadada;"></div>
<div class="abs" style="left:1042px;top:161px;width:15px;height:14px;background:#fff;border:1px solid #b4b4b4"></div>
<svg class="abs" style="left:1046px;top:165px;" width="8" height="5" viewBox="0 0 8 5"><path d="M0 4.5h8L4 0.5z" fill="#555"/></svg>
<div class="abs" style="left:1042px;top:374px;width:15px;height:22px;background:#fff;border:1px solid #a8a8a8"></div>
<div class="abs" style="left:1042px;top:663px;width:15px;height:15px;background:#fff;border:1px solid #b4b4b4"></div>
<svg class="abs" style="left:1046px;top:668px;" width="8" height="5" viewBox="0 0 8 5"><path d="M0 0.5h8L4 4.5z" fill="#555"/></svg>
<div class="t" style="left:9.5px;top:683.12px;font-size:11.2px;line-height:16px;color:#333;font-weight:normal;">Página 5 de 10</div>
<div class="t" style="left:103.5px;top:683.12px;font-size:11.2px;line-height:16px;color:#333;font-weight:normal;">1158 de 1158 palabras</div>
<svg class="abs" style="left:236px;top:684px;" width="17" height="15" viewBox="0 0 17 15"><path d="M0.5 1.5h6l2 1.5v11l-2-1.5h-6z" fill="none" stroke="#555"/><path d="M8.5 3v11" stroke="#555"/><path d="M10 3l5 7M15 3l-5 7" stroke="#555"/><path d="M7 14.5l2 -2" stroke="#555"/></svg>
<div class="t" style="left:268px;top:683.76px;font-size:10.8px;line-height:15px;color:#333;font-weight:normal;">Español (Perú)</div>
<svg class="abs" style="left:361px;top:684px;" width="14" height="14" viewBox="0 0 14 14"><rect x="0.5" y="3.5" width="13" height="10" fill="none" stroke="#555"/><rect x="0" y="0" width="6" height="6" fill="#555"/><path d="M3 6.5h9M3 8.5h9M3 10.5h9M5 5v7M8 5v7M11 5v7" stroke="#555" stroke-dasharray="1 1"/></svg>
<div class="abs" style="left:787px;top:681px;width:40px;height:20px;background:#c6c6c6;"></div>
<svg class="abs" style="left:759px;top:684px;" width="15" height="14" viewBox="0 0 15 14"><path d="M0.5 1.5h6l1 1 1-1h6v11h-6l-1 1-1-1h-6z" fill="none" stroke="#555"/><path d="M7.5 2.5v11M2 4h4M2 6h4M2 8h4M9 4h4M9 6h4M9 8h4" stroke="#555"/></svg>
<svg class="abs" style="left:800px;top:684px;" width="14" height="14" viewBox="0 0 14 14"><rect x="0.5" y="0.5" width="13" height="13" fill="none" stroke="#555"/><path d="M2.5 3.5h9M2.5 5.5h9M2.5 7.5h9M2.5 9.5h9M2.5 11.5h9" stroke="#555"/></svg>
<svg class="abs" style="left:839px;top:684px;" width="15" height="15" viewBox="0 0 15 15"><path d="M0.5 0.5h11v7M0.5 0.5v13h6" fill="none" stroke="#555"/><path d="M2.5 3.5h7M2.5 5.5h7M2.5 7.5h4" stroke="#555"/><circle cx="10.5" cy="11" r="3.5" fill="#555"/></svg>
<div class="abs" style="left:873px;top:690px;width:9px;height:1.3px;background:#555;"></div>
<div class="abs" style="left:886px;top:690px;width:99px;height:1px;background:#9a9a9a;"></div>
<div class="abs" style="left:934px;top:685px;width:5px;height:12px;background:#555;"></div>
<svg class="abs" style="left:991px;top:685px;" width="10" height="10" viewBox="0 0 10 10"><path d="M0 5h9M4.5 0.5v9" stroke="#555" stroke-width="1.3"/></svg>
<div class="t" style="left:1012.5px;top:683.69px;font-size:11px;line-height:15px;color:#333;font-weight:normal;">100%</div>
</body></html>
